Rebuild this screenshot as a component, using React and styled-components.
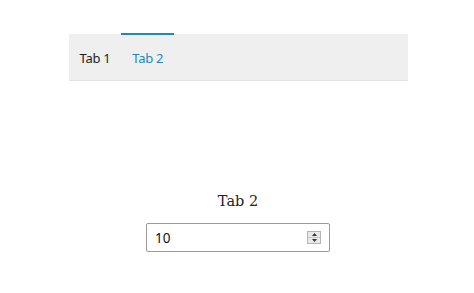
import React, { useState } from 'react';
import styled, { createGlobalStyle } from 'styled-components';

const GlobalStyle = createGlobalStyle`
  body {
    margin: 0;
    background: #fff;
    font-family: "Liberation Serif", serif;
  }
  * {
    box-sizing: border-box;
  }
`;

const Page = styled.div`
  width: 339px;
  margin: 0 auto;
  padding-top: 34px;
  transform: translateX(1px);
`;

const TabList = styled.div`
  display: flex;
  height: 47px;
  background: #efefef;
  border-bottom: 1px solid #e3e3e3;
`;

const Tab = styled.button`
  display: flex;
  align-items: center;
  padding: 0 11px 0 11px;
  border: none;
  border-top: 2px solid ${(p) => (p.$active ? '#1a88cf' : 'transparent')};
  margin-top: -1px;
  background: transparent;
  color: ${(p) => (p.$active ? '#1c86c6' : '#222')};
  font-family: "Noto Sans", sans-serif;
  font-size: 13px;
  letter-spacing: -0.3px;
  cursor: pointer;
`;

const Panel = styled.div`
  display: flex;
  flex-direction: column;
  align-items: center;
  padding-top: 110px;
`;

const Heading = styled.div`
  font-family: "DejaVu Serif", serif;
  font-size: 14.5px;
  color: #222;
  line-height: 20px;
  margin-bottom: 12px;
`;

const Field = styled.div`
  display: flex;
  align-items: center;
  width: 184px;
  height: 29px;
  border: 1px solid #9a9a9a;
  border-radius: 2px;
  padding: 0 8px 0 8px;
  background: #fff;
`;

const Input = styled.input`
  flex: 1;
  min-width: 0;
  border: none;
  outline: none;
  padding: 0;
  font-family: "Noto Sans", sans-serif;
  font-size: 13.5px;
  color: #111;
  background: transparent;
`;

const Spinner = styled.div`
  display: flex;
  flex-direction: column;
  width: 14px;
  height: 13px;
  border: 1px solid #b5b5b5;
  background: #e9e9e9;
`;

const Arrow = styled.div`
  flex: 1;
  display: flex;
  align-items: center;
  justify-content: center;
  & + & {
    border-top: 1px solid #c8c8c8;
  }
`;

const tabs = ['Tab 1', 'Tab 2'];

export default function App() {
  const [active, setActive] = useState(1);
  const [value, setValue] = useState('10');

  return (
    <Page>
      <GlobalStyle />
      <TabList>
        {tabs.map((t, i) => (
          <Tab key={t} $active={i === active} onClick={() => setActive(i)}>
            {t}
          </Tab>
        ))}
      </TabList>
      <Panel>
        <Heading>{tabs[active]}</Heading>
        <Field>
          <Input value={value} onChange={(e) => setValue(e.target.value)} />
          <Spinner>
            <Arrow>
              <svg width="5" height="3" viewBox="0 0 5 3">
                <path d="M0 3 L2.5 0 L5 3 Z" fill="#333" />
              </svg>
            </Arrow>
            <Arrow>
              <svg width="5" height="3" viewBox="0 0 5 3">
                <path d="M0 0 L2.5 3 L5 0 Z" fill="#333" />
              </svg>
            </Arrow>
          </Spinner>
        </Field>
      </Panel>
    </Page>
  );
}
